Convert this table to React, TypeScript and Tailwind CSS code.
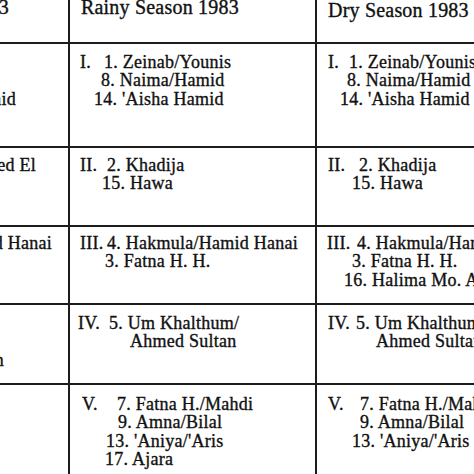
type Line = { pl: number; roman?: string; rw?: number; text: string };

const rainy: Line[][] = [
  [
    { pl: 10, roman: "I.", rw: 24, text: "1. Zeinab/Younis" },
    { pl: 31, text: "8. Naima/Hamid" },
    { pl: 24, text: "14. 'Aisha Hamid" },
  ],
  [
    { pl: 10, roman: "II.", rw: 27, text: "2. Khadija" },
    { pl: 32, text: "15. Hawa" },
  ],
  [
    { pl: 10, roman: "III.", rw: 27, text: "4. Hakmula/Hamid Hanai" },
    { pl: 35, text: "3. Fatna H. H." },
  ],
  [
    { pl: 8, roman: "IV.", rw: 31, text: "5. Um Khalthum/" },
    { pl: 60, text: "Ahmed Sultan" },
  ],
  [
    { pl: 12, roman: "V.", rw: 35, text: "7. Fatna H./Mahdi" },
    { pl: 48, text: "9. Amna/Bilal" },
    { pl: 36, text: "13. 'Aniya/'Aris" },
    { pl: 35, text: "17. Ajara" },
  ],
];

const dry: Line[][] = [
  [
    { pl: 11, roman: "I.", rw: 21, text: "1. Zeinab/Younis" },
    { pl: 30, text: "8. Naima/Hamid" },
    { pl: 23, text: "14. 'Aisha Hamid" },
  ],
  [
    { pl: 11, roman: "II.", rw: 31, text: "2. Khadija" },
    { pl: 35, text: "15. Hawa" },
  ],
  [
    { pl: 10, roman: "III.", rw: 30, text: "4. Hakmula/Hamid Hanai" },
    { pl: 35, text: "3. Fatna H. H." },
    { pl: 27, text: "16. Halima Mo. Ali" },
  ],
  [
    { pl: 11, roman: "IV.", rw: 28, text: "5. Um Khalthum/" },
    { pl: 59, text: "Ahmed Sultan" },
  ],
  [
    { pl: 11, roman: "V.", rw: 32, text: "7. Fatna H./Mahdi" },
    { pl: 43, text: "9. Amna/Bilal" },
    { pl: 35, text: "13. 'Aniya/'Aris" },
  ],
];

// left column is cut off by the crop: only the tail of each line shows
const earlier: { pr: number; line: number; text: string }[][] = [
  [{ pr: 52, line: 2, text: "14. 'Aisha Hamid" }],
  [{ pr: 32, line: 0, text: "2. Khadija/Mohammed El" }],
  [{ pr: 16, line: 0, text: "4. Hakmula/Hamid Hanai" }],
  [{ pr: 64, line: 2, text: "Ahmed Sultan" }],
  [],
];

const rowHeights = ["h-[104px]", "h-[79px]", "h-[78px]", "h-[80px]", "h-[100px]"];
const rowPad = ["pt-[9px]", "pt-[8px]", "pt-[7px]", "pt-[9px]", "pt-[10px]"];

function Cell({ lines }: { lines: Line[] }) {
  return (
    <div>
      {lines.map((l, i) => (
        <div key={i} className="flex whitespace-nowrap" style={{ paddingLeft: l.pl }}>
          {l.roman && (
            <span className="shrink-0" style={{ width: l.rw }}>
              {l.roman}
            </span>
          )}
          <span>{l.text}</span>
        </div>
      ))}
    </div>
  );
}

export default function App() {
  return (
    <div className="w-[474px] h-[474px] overflow-hidden bg-white text-[#111] font-['Liberation_Serif','Times_New_Roman',serif] [-webkit-text-stroke:0.35px_#111]">
      <div className="grid grid-cols-[70px_247px_1fr]">
        {/* header row */}
        <div className="h-[44px] border-r-2 border-b-2 border-[#1c1c1c] overflow-hidden">
          <div className="flex justify-end pr-[59px] -mt-[4px] text-[20px] leading-[22px] tracking-[0.2px] whitespace-nowrap">
            Dry Season 1983
          </div>
        </div>
        <div className="h-[44px] border-r-2 border-b-2 border-[#1c1c1c] overflow-hidden">
          <div className="pl-[11px] -mt-[4px] text-[20px] leading-[22px] tracking-[0.2px] whitespace-nowrap">
            Rainy Season 1983
          </div>
        </div>
        <div className="h-[44px] border-b-2 border-[#1c1c1c] overflow-hidden">
          <div className="pl-[11px] -mt-[1px] text-[20px] leading-[22px] tracking-[0.2px] whitespace-nowrap">
            Dry Season 1983
          </div>
        </div>

        {rainy.map((lines, r) => (
          <div key={r} className="contents text-[18px] leading-[18.4px] tracking-[0.25px]">
            <div className={`${rowHeights[r]} ${rowPad[r]} border-r-2 ${r < 4 ? "border-b-2" : ""} border-[#1c1c1c]`}>
              {[0, 1, 2].map((ln) => {
                const item = earlier[r].find((e) => e.line === ln);
                return (
                  <div
                    key={ln}
                    className="flex justify-end h-[18.4px] whitespace-nowrap"
                    style={{ paddingRight: item ? item.pr : 0 }}
                  >
                    {item ? item.text : ""}
                  </div>
                );
              })}
            </div>
            <div className={`${rowHeights[r]} ${rowPad[r]} border-r-2 ${r < 4 ? "border-b-2" : ""} border-[#1c1c1c]`}>
              <Cell lines={lines} />
            </div>
            <div className={`${rowHeights[r]} ${rowPad[r]} ${r < 4 ? "border-b-2" : ""} border-[#1c1c1c]`}>
              <Cell lines={dry[r]} />
            </div>
          </div>
        ))}
      </div>
    </div>
  );
}
